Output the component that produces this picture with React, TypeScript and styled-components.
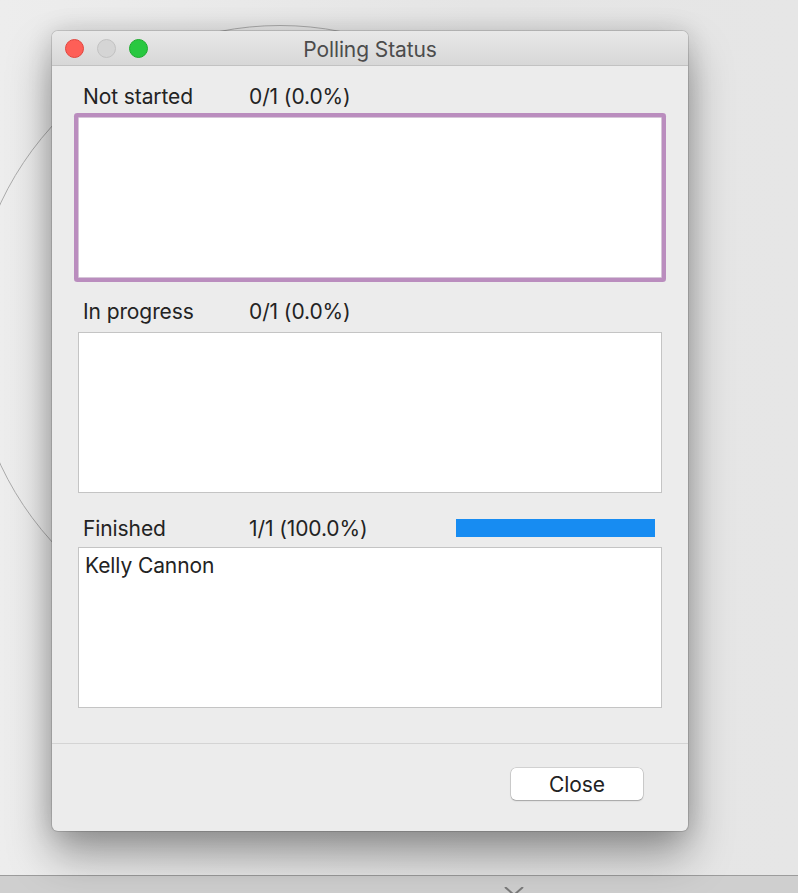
import React from "react";
import styled, { createGlobalStyle } from "styled-components";

const Global = createGlobalStyle`
  html, body { margin: 0; padding: 0; }
  body {
    background: #e6e6e6;
    font-family: Inter, "Noto Sans", "Liberation Sans", sans-serif;
    -webkit-font-smoothing: antialiased;
  }
`;

const Desktop = styled.div`
  position: relative;
  width: 798px;
  height: 893px;
  overflow: hidden;
  background: linear-gradient(90deg, #ededed 0%, #e5e5e5 60%, #e6e6e6 100%);
  display: flex;
  flex-direction: column;
`;

const Backdrop = styled.div`
  position: absolute;
  left: -29px;
  top: 25px;
  width: 618px;
  height: 618px;
  border-radius: 50%;
  border: 1.5px solid #ababab;
  box-sizing: border-box;
`;

const Window = styled.div`
  position: relative;
  z-index: 1;
  margin: 31px 0 0 52px;
  width: 636px;
  height: 800px;
  background: #ececec;
  border-radius: 6px;
  box-shadow: 0 0 0 1px rgba(0, 0, 0, 0.13), 0 24px 44px rgba(0, 0, 0, 0.36),
    0 0 26px rgba(0, 0, 0, 0.14);
  display: flex;
  flex-direction: column;
  overflow: hidden;
`;

const TitleBar = styled.div`
  position: relative;
  height: 34px;
  flex: none;
  background: linear-gradient(180deg, #e8e8e8 0%, #d7d7d7 100%);
  border-bottom: 1px solid #c2c2c2;
  display: flex;
  align-items: center;
  justify-content: center;
`;

const Lights = styled.div`
  position: absolute;
  left: 13px;
  top: 8px;
  display: flex;
  gap: 13px;
`;

const Light = styled.span<{ $fill: string; $edge: string }>`
  width: 19px;
  height: 19px;
  border-radius: 50%;
  box-sizing: border-box;
  background: ${(p) => p.$fill};
  border: 1px solid ${(p) => p.$edge};
`;

const Title = styled.div`
  font-size: 21px;
  color: #4c4c4c;
  letter-spacing: -0.1px;
  padding-top: 2px;
`;

const Content = styled.div`
  padding: 18px 26px 35px;
  display: flex;
  flex-direction: column;
`;

const Section = styled.div<{ $top: number; $gap: number }>`
  display: flex;
  flex-direction: column;
  gap: ${(p) => p.$gap}px;
  margin-top: ${(p) => p.$top}px;
`;

const Header = styled.div`
  height: 24px;
  display: flex;
  align-items: center;
  padding: 0 7px 0 5px;
  font-size: 21px;
  color: #232323;
  letter-spacing: -0.1px;
`;

const Label = styled.span`
  width: 166px;
  flex: none;
`;

const Count = styled.span`
  flex: none;
`;

const Progress = styled.div`
  margin-left: auto;
  width: 199px;
  height: 18px;
  background: #e4e4e4;
`;

const ProgressFill = styled.div`
  height: 100%;
  background: #178cf2;
`;

const ListBox = styled.div<{ $focused?: boolean }>`
  height: 161px;
  box-sizing: border-box;
  background: #fff;
  border: 1px solid ${(p) => (p.$focused ? "#d6c6d8" : "#c4c4c4")};
  border-radius: ${(p) => (p.$focused ? "1px" : "0")};
  box-shadow: ${(p) => (p.$focused ? "0 0 0 4px #ba8dbe" : "none")};
  padding: 6px 6px;
  font-size: 21px;
  color: #232323;
  letter-spacing: -0.1px;
`;

const Item = styled.div`
  line-height: 24px;
`;

const Footer = styled.div`
  flex: 1;
  border-top: 1px solid #d4d4d4;
  display: flex;
  justify-content: flex-end;
  align-items: flex-start;
  padding: 24px 45px 0 0;
`;

const Button = styled.button`
  width: 132px;
  height: 32px;
  background: #fff;
  border: none;
  border-radius: 5px;
  box-shadow: 0 0 0 0.5px rgba(0, 0, 0, 0.22), 0 1px 1.5px rgba(0, 0, 0, 0.22);
  font-family: inherit;
  font-size: 21px;
  color: #222;
  letter-spacing: -0.1px;
  padding: 0;
`;

const Spacer = styled.div`
  flex: 1;
`;

const BottomBar = styled.div`
  height: 17px;
  flex: none;
  border-top: 1px solid #9c9c9c;
  background: #cfcfcf;
  display: flex;
  justify-content: center;
  position: relative;
  z-index: 0;
`;

const Chevron = styled.svg`
  margin-left: 230px;
  margin-top: 11px;
`;

const sections = [
  { label: "Not started", count: "0/1 (0.0%)", items: [] as string[], focused: true, progress: null as number | null, top: 0, gap: 9 },
  { label: "In progress", count: "0/1 (0.0%)", items: [] as string[], focused: false, progress: null as number | null, top: 21, gap: 9 },
  { label: "Finished", count: "1/1 (100.0%)", items: ["Kelly Cannon"], focused: false, progress: 100 as number | null, top: 23, gap: 7 },
];

export default function App() {
  return (
    <Desktop>
      <Global />
      <Backdrop />
      <Window>
        <TitleBar>
          <Lights>
            <Light $fill="#fe5f57" $edge="#e1463f" />
            <Light $fill="#d5d5d5" $edge="#c2c2c2" />
            <Light $fill="#28c840" $edge="#1eab2f" />
          </Lights>
          <Title>Polling Status</Title>
        </TitleBar>
        <Content>
          {sections.map((s) => (
            <Section key={s.label} $top={s.top} $gap={s.gap}>
              <Header>
                <Label>{s.label}</Label>
                <Count>{s.count}</Count>
                {s.progress !== null && (
                  <Progress>
                    <ProgressFill style={{ width: `${s.progress}%` }} />
                  </Progress>
                )}
              </Header>
              <ListBox $focused={s.focused}>
                {s.items.map((it) => (
                  <Item key={it}>{it}</Item>
                ))}
              </ListBox>
            </Section>
          ))}
        </Content>
        <Footer>
          <Button>Close</Button>
        </Footer>
      </Window>
      <Spacer />
      <BottomBar>
        <Chevron width="22" height="8" viewBox="0 0 22 8">
          <path d="M2 0 L11 8 M20 0 L11 8" stroke="#7a7a7a" strokeWidth="2" fill="none" />
        </Chevron>
      </BottomBar>
    </Desktop>
  );
}
